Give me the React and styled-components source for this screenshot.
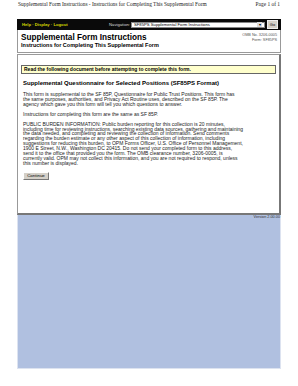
import React from 'react'
import styled, { createGlobalStyle } from 'styled-components'

const Global = createGlobalStyle`
  body {
    margin: 0;
    background: #fff;
    font-family: "Liberation Sans", Arial, sans-serif;
  }
`

const paragraphOne = [
  'This form is supplemental to the SF 85P, Questionnaire for Public Trust Positions. This form has',
  'the same purposes, authorities, and Privacy Act Routine uses, described on the SF 85P. The',
  'agency which gave you this form will tell you which questions to answer.',
]

const paragraphTwo = ['Instructions for completing this form are the same as SF 85P.']

const paragraphThree = [
  'PUBLIC BURDEN INFORMATION: Public burden reporting for this collection is 20 minutes,',
  'including time for reviewing instructions, searching existing data sources, gathering and maintaining',
  'the data needed, and completing and reviewing the collection of information. Send comments',
  'regarding the burden estimate or any other aspect of this collection of information, including',
  'suggestions for reducing this burden, to OPM Forms Officer, U.S. Office of Personnel Management,',
  '1900 E Street, N.W., Washington DC 20415. Do not send your completed form to this address,',
  'send it to the office that provided you the form. The OMB clearance number, 3206-0005, is',
  'currently valid. OPM may not collect this information, and you are not required to respond, unless',
  'this number is displayed.',
]

function Paragraph({ lines }) {
  return (
    <Para>
      {lines.map((l) => (
        <Line key={l}>{l}</Line>
      ))}
    </Para>
  )
}

export default function App() {
  return (
    <>
      <Global />
      <PrintHeader>
        <span>Supplemental Form Instructions - Instructions for Completing This Supplemental Form</span>
        <span>Page 1 of 1</span>
      </PrintHeader>
      <Frame>
        <NavBar>
          <UserLinks>Help · Display · Logout</UserLinks>
          <NavLabel>Navigation:</NavLabel>
          <Select>
            <span>SF85PS Supplemental Form Instructions</span>
            <SelectArrow>▾</SelectArrow>
          </Select>
          <GoButton>Go</GoButton>
        </NavBar>
        <TitlePanel>
          <div>
            <Title>Supplemental Form Instructions</Title>
            <Subtitle>Instructions for Completing This Supplemental Form</Subtitle>
          </div>
          <FormMeta>
            <div>OMB No. 3206-0005</div>
            <div>Form: SF85PS</div>
          </FormMeta>
        </TitlePanel>
        <ContentPanel>
          <Notice>Read the following document before attempting to complete this form.</Notice>
          <SectionTitle>Supplemental Questionnaire for Selected Positions (SF85PS Format)</SectionTitle>
          <Paragraph lines={paragraphOne} />
          <Paragraph lines={paragraphTwo} />
          <Paragraph lines={paragraphThree} />
          <ContinueButton>Continue</ContinueButton>
        </ContentPanel>
        <Footer>
          <Version>Version 2.00.00</Version>
        </Footer>
      </Frame>
    </>
  )
}

const PrintHeader = styled.div`
  display: flex;
  justify-content: space-between;
  align-items: flex-start;
  height: 19px;
  padding: 1px 18px 0 18px;
  box-sizing: border-box;
  font-family: "Liberation Serif", "Times New Roman", serif;
  font-size: 5.4px;
  line-height: 7px;
  color: #222;
`

const Frame = styled.div`
  margin-left: 17px;
  width: 264px;
`

const NavBar = styled.div`
  height: 11px;
  background: #0a0a0a;
  display: flex;
  align-items: center;
  padding: 0 3px 0 5px;
`

const UserLinks = styled.span`
  color: #d8d800;
  font-size: 4.2px;
  font-weight: bold;
  flex: 1;
`

const NavLabel = styled.span`
  color: #ddd;
  font-size: 4.2px;
  margin-right: 1px;
`

const Select = styled.div`
  width: 134px;
  height: 6px;
  background: #fff;
  border: 0.5px solid #888;
  display: flex;
  align-items: center;
  justify-content: space-between;
  font-size: 4.2px;
  padding-left: 2px;
  box-sizing: border-box;
`

const SelectArrow = styled.span`
  width: 5px;
  height: 5px;
  background: #ddd;
  font-size: 4px;
  line-height: 5px;
  text-align: center;
  margin-right: 2px;
`

const GoButton = styled.span`
  margin-left: 2px;
  width: 9px;
  height: 7px;
  background: #d4d0c8;
  border: 0.5px solid #eee;
  font-size: 4px;
  line-height: 7px;
  text-align: center;
`

const TitlePanel = styled.div`
  height: 23px;
  border: 1px solid #999;
  border-top: none;
  display: flex;
  justify-content: space-between;
  padding: 3px 3px 0 3px;
  box-sizing: border-box;
`

const Title = styled.div`
  font-size: 8.2px;
  font-weight: bold;
  line-height: 9px;
`

const Subtitle = styled.div`
  font-size: 5.5px;
  font-weight: bold;
  line-height: 7px;
`

const FormMeta = styled.div`
  font-size: 3.8px;
  line-height: 5px;
  color: #555;
  text-align: right;
`

const ContentPanel = styled.div`
  margin-top: 1px;
  border: 1px solid #999;
  border-right: 2px solid #777;
  border-bottom: 2px solid #777;
  padding: 10px 3px 17px 3px;
  box-sizing: border-box;
  height: 161px;
`

const Notice = styled.div`
  background: #ffffcc;
  border: 0.5px solid #666;
  font-size: 5px;
  font-weight: bold;
  line-height: 7px;
  padding-left: 2px;
`

const SectionTitle = styled.div`
  margin-top: 5px;
  font-size: 6px;
  font-weight: bold;
  line-height: 8px;
  padding-left: 2px;
`

const Para = styled.div`
  margin-top: 5px;
  font-size: 5px;
  line-height: 4.9px;
  color: #222;
  padding-left: 2px;
`

const Line = styled.div`
  white-space: nowrap;
`

const ContinueButton = styled.div`
  margin-top: 6px;
  margin-left: 2px;
  width: 26px;
  height: 8px;
  background: #d4d0c8;
  border: 1px solid;
  border-color: #fff #777 #777 #fff;
  box-sizing: border-box;
  font-size: 4.4px;
  line-height: 6px;
  text-align: center;
`

const Footer = styled.div`
  height: 154px;
  background: #b0c0e0;
  border: 1px solid #dde3f0;
  border-top: none;
  box-sizing: border-box;
`

const Version = styled.div`
  text-align: right;
  font-size: 3.8px;
  color: #333;
  line-height: 5px;
`
